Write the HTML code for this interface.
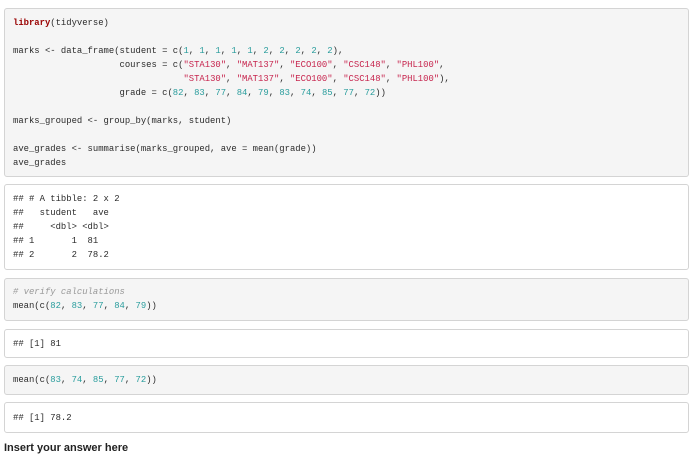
<!DOCTYPE html>
<html><head><meta charset="utf-8"><style>
body{margin:0;width:700px;height:465px;background:#fff;position:relative;overflow:hidden}
.b{position:absolute;left:4px;width:685px;border:1px solid #d4d4d4;border-radius:3px;box-sizing:border-box;font-family:"Liberation Mono",monospace;font-size:8.9px;line-height:14px;color:#2b2b2b;white-space:pre;padding:0 0 0 8px}
.g{background:#f5f5f5}
.w{background:#fff}
.n{color:#2a9d9d}
.s{color:#c7254e}
.k{color:#990000;font-weight:bold}
.c{color:#999;font-style:italic}
.t{position:absolute;left:4px;top:442px;font-family:"Liberation Sans",sans-serif;font-weight:bold;font-size:11px;color:#222}
</style></head><body>
<div class="b g" style="top:8px;height:169px;padding-top:7px"><span class="k">library</span>(tidyverse)

marks &lt;- data_frame(student = c(<span class="n">1</span>, <span class="n">1</span>, <span class="n">1</span>, <span class="n">1</span>, <span class="n">1</span>, <span class="n">2</span>, <span class="n">2</span>, <span class="n">2</span>, <span class="n">2</span>, <span class="n">2</span>),
                    courses = c(<span class="s">"STA130"</span>, <span class="s">"MAT137"</span>, <span class="s">"ECO100"</span>, <span class="s">"CSC148"</span>, <span class="s">"PHL100"</span>,
                                <span class="s">"STA130"</span>, <span class="s">"MAT137"</span>, <span class="s">"ECO100"</span>, <span class="s">"CSC148"</span>, <span class="s">"PHL100"</span>),
                    grade = c(<span class="n">82</span>, <span class="n">83</span>, <span class="n">77</span>, <span class="n">84</span>, <span class="n">79</span>, <span class="n">83</span>, <span class="n">74</span>, <span class="n">85</span>, <span class="n">77</span>, <span class="n">72</span>))

marks_grouped &lt;- group_by(marks, student)

ave_grades &lt;- summarise(marks_grouped, ave = mean(grade))
ave_grades</div>
<div class="b w" style="top:184px;height:86px;padding-top:7px">## # A tibble: 2 x 2
##   student   ave
##     &lt;dbl&gt; &lt;dbl&gt;
## 1       1  81
## 2       2  78.2</div>
<div class="b g" style="top:278px;height:43px;padding-top:6px"><span class="c"># verify calculations</span>
mean(c(<span class="n">82</span>, <span class="n">83</span>, <span class="n">77</span>, <span class="n">84</span>, <span class="n">79</span>))</div>
<div class="b w" style="top:329px;height:29px;padding-top:7px">## [1] 81</div>
<div class="b g" style="top:365px;height:30px;padding-top:7px">mean(c(<span class="n">83</span>, <span class="n">74</span>, <span class="n">85</span>, <span class="n">77</span>, <span class="n">72</span>))</div>
<div class="b w" style="top:402px;height:31px;padding-top:8px">## [1] 78.2</div>
<div class="t">Insert your answer here</div>
</body></html>
